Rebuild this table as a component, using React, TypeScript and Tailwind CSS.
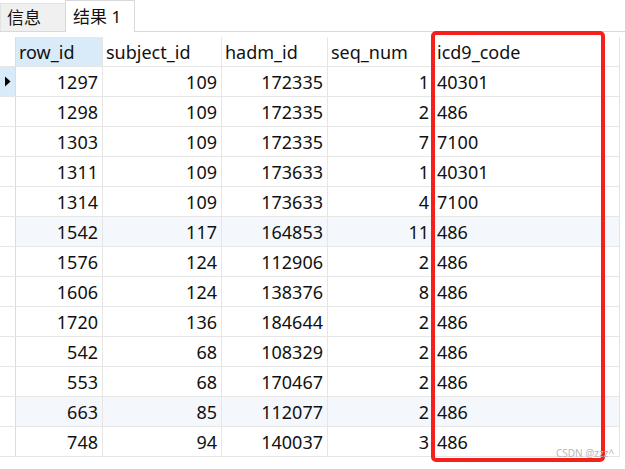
import React from "react";

const rows = [
  ["1297", "109", "172335", "1", "40301"],
  ["1298", "109", "172335", "2", "486"],
  ["1303", "109", "172335", "7", "7100"],
  ["1311", "109", "173633", "1", "40301"],
  ["1314", "109", "173633", "4", "7100"],
  ["1542", "117", "164853", "11", "486"],
  ["1576", "124", "112906", "2", "486"],
  ["1606", "124", "138376", "8", "486"],
  ["1720", "136", "184644", "2", "486"],
  ["542", "68", "108329", "2", "486"],
  ["553", "68", "170467", "2", "486"],
  ["663", "85", "112077", "2", "486"],
  ["748", "94", "140037", "3", "486"],
];

// rows shown with the faint blue tint
const tinted = [5, 11];

const font = { fontFamily: '"Noto Sans", "Noto Sans CJK SC", sans-serif' };

export default function App() {
  return (
    <div
      className="relative w-[625px] h-[469px] bg-white text-[18px] text-[#111] overflow-hidden"
      style={font}
    >
      {/* tab bar */}
      <div className="flex h-[32px] border-b border-[#d9d9d9]">
        <div className="mt-[3px] w-[65px] h-[28px] bg-[#f0f0f0] border-t border-l border-[#e3e3e3] flex items-center pl-[6px] text-[17px] leading-none">
          信息
        </div>
        <div className="w-[70px] h-[32px] -mb-px bg-white border border-b-0 border-[#d9d9d9] flex items-center pl-[7px] text-[17px] leading-none">
          结果 1
        </div>
      </div>

      {/* grid */}
      <div className="mt-[5px] w-[620px] border-r border-[#e3e3e3]">
        <div className="flex h-[30px] border-b border-[#e6e6e6] leading-none">
          <div className="w-[16px] border-r border-[#dcdcdc]" />
          <div className="w-[87px] bg-[#d9eaf8] border-r border-[#e6e6e6] flex items-center pl-[3px]">
            row_id
          </div>
          <div className="w-[119px] border-r border-[#e6e6e6] flex items-center pl-[3px]">
            subject_id
          </div>
          <div className="w-[106px] border-r border-[#e6e6e6] flex items-center pl-[3px]">
            hadm_id
          </div>
          <div className="w-[105px] border-r border-[#e6e6e6] flex items-center pl-[3px]">
            seq_num
          </div>
          <div className="flex-1 flex items-center pl-[4px]">icd9_code</div>
        </div>

        {rows.map((r, i) => (
          <div
            key={i}
            className={`flex h-[30px] border-b border-[#e6e6e6] leading-none ${
              tinted.includes(i) ? "bg-[#f4f8fd]" : ""
            }`}
          >
            <div
              className={`w-[16px] border-r border-[#dcdcdc] flex items-center justify-center ${
                i === 0 ? "bg-[#d9eaf8]" : "bg-white"
              }`}
            >
              {i === 0 && (
                <svg width="7" height="11" viewBox="0 0 7 11">
                  <path d="M1 0.5 L6.5 5.5 L1 10.5 Z" fill="#000" />
                </svg>
              )}
            </div>
            <div className="w-[87px] border-r border-[#e6e6e6] flex items-center justify-end pr-[4px]">
              {r[0]}
            </div>
            <div className="w-[119px] border-r border-[#e6e6e6] flex items-center justify-end pr-[4px]">
              {r[1]}
            </div>
            <div className="w-[106px] border-r border-[#e6e6e6] flex items-center justify-end pr-[4px]">
              {r[2]}
            </div>
            <div className="w-[105px] border-r border-[#e6e6e6] flex items-center justify-end pr-[3px]">
              {r[3]}
            </div>
            <div className="flex-1 flex items-center pl-[4px]">{r[4]}</div>
          </div>
        ))}
      </div>

      {/* red highlight box */}
      <div className="absolute left-[431px] top-[31px] w-[174px] h-[431px] border-4 border-[#f5201b] rounded-[5px] pointer-events-none" />

      {/* watermark */}
      <div className="absolute left-[556px] top-[448px] text-[10px] text-[#b8b8b8] leading-none">
        CSDN @zzz^
      </div>
    </div>
  );
}
